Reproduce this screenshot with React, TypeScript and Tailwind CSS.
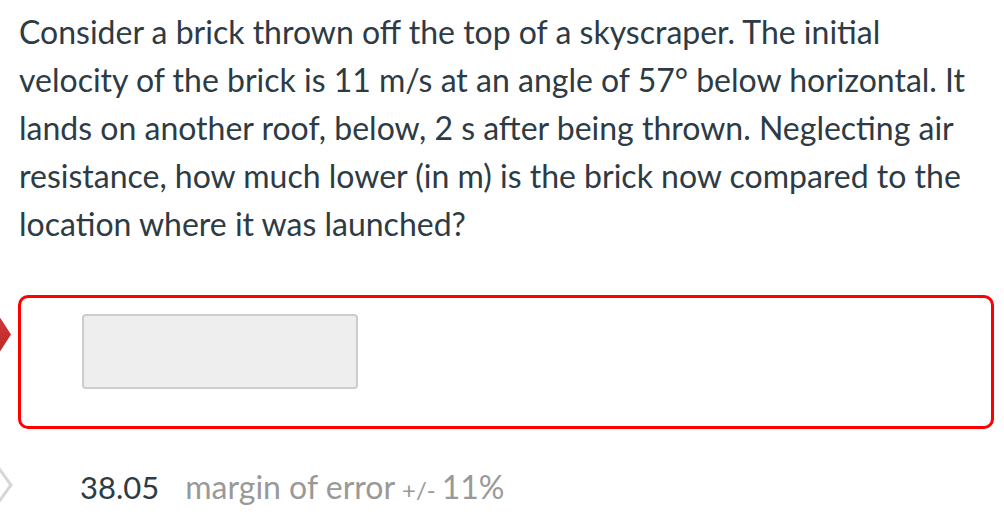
export default function App() {
  return (
    <div className="relative w-[1004px] h-[516px] overflow-hidden bg-white font-['Lato','Liberation_Sans',sans-serif] text-[#2d3b45]">
      <div className="pl-[19px] pt-[8px]">
        <p className="text-[32px] leading-[48px] w-[975px]">
          Consider a brick thrown off the top of a skyscraper. The initial velocity of the brick is 11 m/s at an angle of 57° below horizontal. It lands on another roof, below, 2 s after being thrown. Neglecting air resistance, how much lower (in m) is the brick now compared to the location where it was launched?
        </p>
      </div>

      <div className="relative mt-[47px]">
        {/* incorrect marker */}
        <div className="absolute left-[-12px] top-[4px] w-[23px] h-[71px] bg-gradient-to-b from-[#d84040] to-[#b52020] [clip-path:polygon(0_0,100%_50%,0_100%)]" />
        <div className="ml-[18px] mr-[10px] h-[134px] rounded-[10px] border-[3.5px] border-[#ff0000] pl-[61px] pt-[16px]">
          <div className="w-[276px] h-[75px] rounded-[4px] border-2 border-[#cdcdcd] bg-[#eeeeee]" />
        </div>
      </div>

      <div className="relative mt-[34px] flex items-baseline pl-[80px]">
        <svg className="absolute left-[-2px] top-[2px]" width="16" height="40" viewBox="0 0 16 40">
          <path d="M0 2 L13 20 L0 38" fill="none" stroke="#d6d6d6" strokeWidth="3" />
        </svg>
        <span className="text-[31px] text-[#2d3b45]">38.05</span>
        <span className="ml-[26px] text-[32px] text-[#999999]">margin of error</span>
        <span className="ml-[7px] text-[24px] text-[#999999]">+/-</span>
        <span className="ml-[6px] text-[32px] text-[#999999]">11%</span>
      </div>
    </div>
  );
}
